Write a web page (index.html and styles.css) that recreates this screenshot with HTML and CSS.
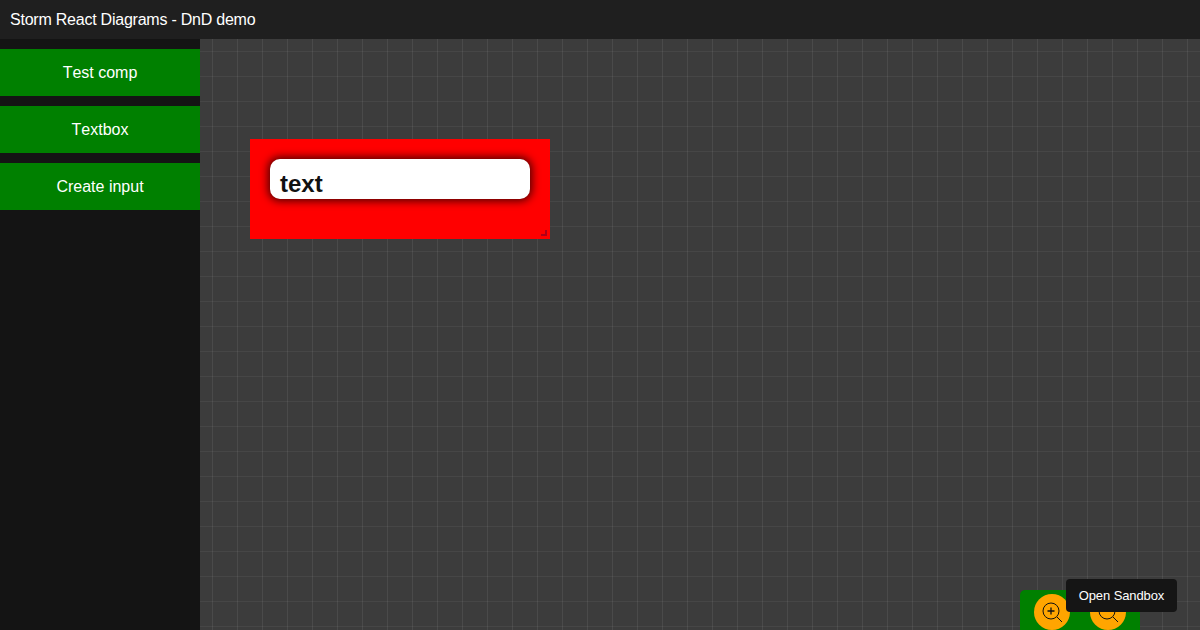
FILE: index.html
```html
<!DOCTYPE html>
<html lang="en">
<head>
<meta charset="utf-8">
<title>Storm React Diagrams - DnD demo</title>
<link rel="stylesheet" href="styles.css">
</head>
<body>
<div class="app">
  <header class="title-bar">Storm React Diagrams - DnD demo</header>
  <div class="content">
    <aside class="tray">
      <div class="tray-item">Test comp</div>
      <div class="tray-item">Textbox</div>
      <div class="tray-item">Create input</div>
    </aside>
    <main class="canvas">
      <div class="node">
        <div class="textbox">text</div>
        <span class="resize-handle"></span>
      </div>
      <div class="zoom-controls">
        <button class="zoom-button" aria-label="Zoom in">
          <svg viewBox="0 0 24 24" width="24" height="24" fill="none" stroke="#111" stroke-width="1">
            <circle cx="11" cy="11" r="8"/>
            <path d="M17 17l5 5"/>
            <path class="plus" d="M11 7.5v7M7.5 11h7"/>
          </svg>
        </button>
        <button class="zoom-button" aria-label="Zoom out">
          <svg viewBox="0 0 24 24" width="24" height="24" fill="none" stroke="#111" stroke-width="1">
            <circle cx="11" cy="11" r="8"/>
            <path d="M17 17l5 5"/>
            <path class="plus" d="M7.5 11h7"/>
          </svg>
        </button>
      </div>
      <div class="sandbox-button">Open Sandbox</div>
    </main>
  </div>
</div>
</body>
</html>
```
FILE: styles.css
```css
* { box-sizing: border-box; }
html, body { margin: 0; height: 100%; overflow: hidden; }
body { font-family: "Liberation Sans", Arial, sans-serif; color: #fff; font-kerning: none; }
.app { display: flex; flex-direction: column; height: 630px; background: #141414; }
.title-bar {
  height: 39px; flex: none; padding: 0 10px;
  display: flex; align-items: center;
  background: #1f1f1f; font-size: 16px; line-height: 39px; letter-spacing: -0.23px;
}
.content { display: flex; flex: 1; min-height: 0; }
.tray { width: 200px; flex: none; display: flex; flex-direction: column; gap: 10px; padding-top: 10px; background: #141414; }
.tray-item {
  height: 47px; display: flex; align-items: center; justify-content: center;
  background: #008000; font-size: 16px;
}
.canvas {
  position: relative; flex: 1; overflow: hidden;
  background-color: #3c3c3c;
  background-size: 50px 50px;
  background-image:
    linear-gradient(0deg, transparent 24%, rgba(255,255,255,.05) 25%, rgba(255,255,255,.05) 26%, transparent 27%, transparent 74%, rgba(255,255,255,.05) 75%, rgba(255,255,255,.05) 76%, transparent 77%, transparent),
    linear-gradient(90deg, transparent 24%, rgba(255,255,255,.07) 25%, rgba(255,255,255,.07) 26%, transparent 27%, transparent 74%, rgba(255,255,255,.07) 75%, rgba(255,255,255,.07) 76%, transparent 77%, transparent);
}
.node {
  position: absolute; left: 50px; top: 100px;
  width: 300px; height: 100px; padding: 20px;
  background: #f00;
}
.textbox {
  height: 40px; padding: 10px 10px 0;
  background: #fff; color: #111; border-radius: 10px;
  box-shadow: 0 0 8px 2px rgba(0,0,0,.7);
  font-size: 24px; font-weight: bold; line-height: 30px;
}
.resize-handle {
  position: absolute; right: 3px; bottom: 3px; width: 6px; height: 6px;
  border-right: 2px solid #b00018; border-bottom: 2px solid #b00018;
}
.zoom-controls {
  position: absolute; left: 820px; top: 551px;
  width: 120px; height: 50px; padding: 4px 14px;
  display: flex; gap: 20px;
  background: #008000; border-radius: 5px 5px 0 0;
}
.zoom-button {
  width: 36px; height: 36px; flex: none; padding: 0; border: 0; border-radius: 50%;
  display: flex; align-items: center; justify-content: center;
  background: #ffa500;
}
.plus { stroke-width: 1.3; }
.sandbox-button {
  position: absolute; left: 866px; top: 540px;
  width: 111px; height: 33px; padding-bottom: 1px;
  display: flex; align-items: center; justify-content: center;
  background: #151515; border-radius: 4px;
  font-size: 13px; letter-spacing: -0.1px;
  color: #fff;
}
```
